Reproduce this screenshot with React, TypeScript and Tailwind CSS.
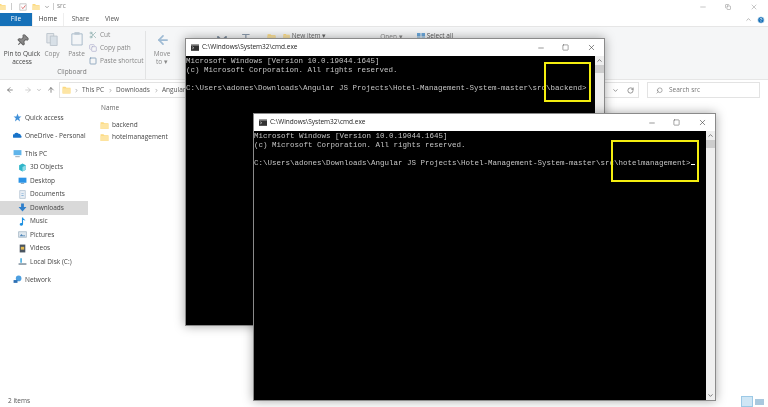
import React from 'react';
import { ArrowLeft, ArrowRight, ArrowUp, ChevronDown, ChevronUp, ChevronRight, RotateCw, Search, Scissors, Pin, Minus, Square, X, Copy, HelpCircle } from 'lucide-react';

const Folder: React.FC<{ className?: string }> = ({ className }) => (
  <svg viewBox="0 0 16 16" className={className}>
    <path d="M1 2h5l2 2h7v10H1z" fill="#fcd97e" />
    <path d="M1 5h14v9H1z" fill="#fde5a4" />
  </svg>
);

const NavIcon: React.FC<{ kind: string }> = ({ kind }) => {
  const cls = 'w-[9px] h-[9px] shrink-0';
  switch (kind) {
    case 'star':
      return <svg viewBox="0 0 16 16" className={cls}><path d="M8 1l2 5h5l-4 3.5L12.5 15 8 11.5 3.5 15 5 9.5 1 6h5z" fill="#3f8fd8" /></svg>;
    case 'cloud':
      return <svg viewBox="0 0 16 16" className={cls}><path d="M1 12a3 3 0 011-6 4.500 4.500 0 018-1 3.500 3.500 0 014 3 2.200 2.200 0 010 4z" fill="#1873c9" /></svg>;
    case 'pc':
      return <svg viewBox="0 0 16 16" className={cls}><path d="M1 2h14v9H1z" fill="#5fb4ea" /><path d="M4 13h8v1.500H4z" fill="#8a9aa8" /></svg>;
    case 'cube':
      return <svg viewBox="0 0 16 16" className={cls}><path d="M8 1l6 3v8l-6 3-6-3V4z" fill="#2fb5c9" /><path d="M8 7l6-3v8l-6 3z" fill="#8fdbe8" /></svg>;
    case 'desktop':
      return <svg viewBox="0 0 16 16" className={cls}><path d="M1 3h14v9H1z" fill="#2a93e6" /><path d="M5 13h6v1H5z" fill="#4d6c85" /></svg>;
    case 'doc':
      return <svg viewBox="0 0 16 16" className={cls}><path d="M3 1h10v14H3z" fill="#e8eef4" stroke="#9db1c4" /><path d="M6 6h4v1H6zm0 3h4v1H6z" fill="#6fa2cf" /></svg>;
    case 'down':
      return <svg viewBox="0 0 16 16" className={cls}><path d="M5.500 1h5v6H15l-7 8-7-8h4.500z" fill="#2f7fcb" /></svg>;
    case 'music':
      return <svg viewBox="0 0 16 16" className={cls}><path d="M7 1h2c0 3 4 3 4 6-1-1-2-1.500-4-1.500V13a3 2.500 0 11-2-2.300z" fill="#1c8fe0" /></svg>;
    case 'pic':
      return <svg viewBox="0 0 16 16" className={cls}><path d="M1 3h14v10H1z" fill="#dfe8ef" stroke="#8aa0b2" /><path d="M3 11l3-4 3 3 2-1 2 2z" fill="#4f86b8" /></svg>;
    case 'video':
      return <svg viewBox="0 0 16 16" className={cls}><path d="M3 1h10v14H3z" fill="#4a5560" /><path d="M5 5h6v5H5z" fill="#e2b84f" /></svg>;
    case 'disk':
      return <svg viewBox="0 0 16 16" className={cls}><path d="M1 11h14v3H1z" fill="#8b9aa6" /><path d="M4 2h3v8H4z" fill="#4fb0e0" /></svg>;
    default:
      return <svg viewBox="0 0 16 16" className={cls}><circle cx="10" cy="6" r="5" fill="#4d9fe0" /><path d="M1 9h7v5H1z" fill="#2d6fb3" /></svg>;
  }
};

const NavRow: React.FC<{ icon: string; label: string; indent?: boolean; active?: boolean; className?: string }> = ({ icon, label, indent, active, className }) => (
  <div className={`flex items-center h-[13.5px] gap-[3px] ${indent ? 'pl-[18px]' : 'pl-[13px]'} ${active ? 'bg-[#d9d9d9]' : ''} ${className ?? ''}`}>
    <NavIcon kind={icon} />
    <span className="whitespace-nowrap">{label}</span>
  </div>
);

const CmdWindow: React.FC<{ className: string; lines: string[]; cursor?: boolean; box: string }> = ({ className, lines, cursor, box }) => (
  <div className={`absolute flex flex-col bg-white border border-[#8a8a8a] shadow-[0_0_10px_rgba(0,0,0,0.35)] ${className}`}>
    <div className="h-[17px] shrink-0 flex items-center pl-[5px] text-[#222] text-[6.5px]">
      <svg viewBox="0 0 12 10" className="w-[8px] h-[7px] mr-[3px] shrink-0">
        <path d="M0 0h12v10H0z" fill="#333" />
        <path d="M0 0h12v2H0z" fill="#aaa" />
        <path d="M2 4l2 1.500L2 7" stroke="#fff" fill="none" />
      </svg>
      <span className="flex-1">C:\Windows\System32\cmd.exe</span>
      <Minus className="w-[8px] h-[8px] mr-[17px] text-[#333]" strokeWidth={1.5} />
      <Square className="w-[7px] h-[7px] mr-[18px] text-[#333]" strokeWidth={1.5} />
      <X className="w-[9px] h-[9px] mr-[8px] text-[#333]" strokeWidth={1.5} />
    </div>
    <div className="flex-1 flex min-h-0">
      <pre className="flex-1 bg-black text-[#c4c4c4] font-['Liberation_Mono',monospace] text-[7.5px] leading-[9px] pt-[1px] overflow-hidden">
        {lines.join('\n')}
        {cursor && <span className="inline-block w-[4px] h-[1.5px] bg-white align-baseline" />}
      </pre>
      <div className="w-[9px] bg-[#efefef] flex flex-col items-center justify-between">
        <div className="w-full flex flex-col items-center">
          <ChevronUp className="w-[7px] h-[7px] my-[1px] text-[#555]" strokeWidth={2.5} />
          <div className="w-full h-[8px] bg-[#cdcdcd]" />
        </div>
        <ChevronDown className="w-[7px] h-[7px] mb-[1px] text-[#555]" strokeWidth={2.5} />
      </div>
    </div>
    <div className={`absolute border-[2px] border-[#f4ee10] ${box}`} />
  </div>
);

const App: React.FC = () => (
  <div className="relative w-[768px] h-[407px] overflow-hidden bg-white blur-[0.4px] font-['Open_Sans',sans-serif] text-[6.5px] leading-none text-[#333]">
    {/* Explorer */}
    <div className="flex flex-col h-full">
      <div className="h-[13px] flex items-center shrink-0">
        <Folder className="w-[8px] h-[8px] -ml-[2px] mr-[5px]" />
        <div className="w-px h-[7px] bg-[#ccc] mr-[7px]" />
        <svg viewBox="0 0 10 10" className="w-[8px] h-[8px] mr-[5px]"><path d="M1 1h8v8H1z" fill="#fff" stroke="#bbb" /><path d="M3 5l2 2 3-4" stroke="#d05050" fill="none" /></svg>
        <Folder className="w-[8px] h-[8px] mr-[4px]" />
        <ChevronDown className="w-[6px] h-[6px] mr-[3px] text-[#555]" />
        <div className="w-px h-[7px] bg-[#ccc] mr-[3px]" />
        <span className="text-[#888]">src</span>
        <div className="flex-1" />
        <Minus className="w-[8px] h-[8px] text-[#aaa] mr-[18px]" />
        <Copy className="w-[6px] h-[6px] text-[#888] mr-[19px]" />
        <X className="w-[8px] h-[8px] text-[#aaa] mr-[10px]" />
      </div>
      <div className="h-[13px] flex items-center shrink-0">
        <div className="w-[32px] h-full bg-[#1570b8] text-white flex items-center justify-center">File</div>
        <div className="w-[32px] h-full flex items-center justify-center border-x border-[#eee]">Home</div>
        <div className="w-[33px] text-center text-[#555]">Share</div>
        <div className="w-[30px] text-center text-[#555]">View</div>
        <div className="flex-1" />
        <ChevronUp className="w-[7px] h-[7px] text-[#888] mr-[5px]" />
        <HelpCircle className="w-[8px] h-[8px] text-white fill-[#1570b8] mr-[3px]" />
      </div>
      <div className="h-[54px] shrink-0 bg-[#f5f6f7] border-y border-[#e6e6e6] flex pt-[4px] text-[#666]">
        <div className="w-[146px] shrink-0 flex flex-col border-r border-[#e2e3e4]">
          <div className="flex h-[37px]">
            <div className="w-[40px] flex flex-col items-center pl-[4px] text-[#444]">
              <Pin className="w-[13px] h-[13px] rotate-45 mt-[3px] mb-[4px] text-[#666] fill-[#888]" />
              <span className="whitespace-nowrap mb-[1px]">Pin to Quick</span>
              <span>access</span>
            </div>
            <div className="w-[24px] flex flex-col items-center text-[#888]">
              <svg viewBox="0 0 14 16" className="w-[12px] h-[15px] mt-[1px] mb-[4px]"><path d="M1 1h8v11H1z" fill="#e2e6ea" stroke="#b9c2ca" /><path d="M5 4h8v11H5z" fill="#d8e0e7" stroke="#b9c2ca" /></svg>
              <span>Copy</span>
            </div>
            <div className="w-[25px] flex flex-col items-center text-[#888]">
              <svg viewBox="0 0 14 16" className="w-[12px] h-[16px] mb-[4px]"><path d="M1 2h12v13H1z" fill="#f3f5f7" stroke="#9fb3c4" /><path d="M4 0h6v3H4z" fill="#b9c6d1" /></svg>
              <span>Paste</span>
            </div>
            <div className="flex flex-col gap-[4px] text-[#888] whitespace-nowrap">
              <div className="flex items-center gap-[3px]"><Scissors className="w-[8px] h-[8px] text-[#8aa]" />Cut</div>
              <div className="flex items-center gap-[3px] mt-[1px]"><Copy className="w-[8px] h-[8px] text-[#aac]" />Copy path</div>
              <div className="flex items-center gap-[3px] mt-[1px]"><Square className="w-[8px] h-[8px] text-[#68a]" />Paste shortcut</div>
            </div>
          </div>
          <div className="mt-[1px] text-center text-[#777] pr-[1px]">Clipboard</div>
        </div>
        <div className="flex-1 flex text-[#888]">
          <div className="w-[28px] ml-[2px] flex flex-col items-center">
            <ArrowRight className="w-[14px] h-[14px] rotate-180 mt-[2px] mb-[4px] ml-[2px] text-[#9fbbd4]" strokeWidth={3} />
            <span className="mb-[1px]">Move</span><span>to ▾</span>
          </div>
          <div className="w-[38px]" />
          <X className="w-[16px] h-[16px] mt-[2px] text-[#7c8c9c]" strokeWidth={3} />
          <div className="w-[12px]" />
          <span className="text-[14px] text-[#8a9aaa] mt-[1px]">T</span>
          <div className="w-[17px]" />
          <Folder className="w-[9px] h-[9px] mt-[2px]" />
          <div className="flex items-center h-[11px] ml-[7px] gap-[2px] text-[#666]">
            <Folder className="w-[7px] h-[7px]" /><span className="whitespace-nowrap">New item ▾</span>
          </div>
          <div className="w-[54px]" />
          <span className="mt-[3px] whitespace-nowrap">Open ▾</span>
          <div className="w-[14px]" />
          <div className="flex items-center h-[11px] gap-[2px] text-[#555]">
            <svg viewBox="0 0 8 8" className="w-[8px] h-[8px]"><path d="M0 0h3.500v3.500H0zM4.500 0H8v3.500H4.500zM0 4.500h3.500V8H0zM4.500 4.500H8V8H4.500z" fill="#6aa6d8" /></svg>
            <span className="whitespace-nowrap">Select all</span>
          </div>
        </div>
      </div>
      <div className="h-[20px] shrink-0 flex items-center text-[#555]">
        <ArrowLeft className="w-[8px] h-[8px] ml-[6px] mr-[10px] text-[#555]" />
        <ArrowRight className="w-[8px] h-[8px] mr-[4px] text-[#bbb]" />
        <ChevronDown className="w-[6px] h-[6px] mr-[5px] text-[#888]" />
        <ArrowUp className="w-[8px] h-[8px] mr-[4px] text-[#555]" />
        <div className="w-[580px] h-[16px] border border-[#e3e3e3] flex items-center pl-[2px] shrink-0">
          <Folder className="w-[9px] h-[10px] mr-[3px]" />
          <ChevronRight className="w-[5px] h-[5px] mr-[3px]" />
          <span className="mr-[4px]">This PC</span>
          <ChevronRight className="w-[5px] h-[5px] mr-[3px]" />
          <span className="mr-[4px]">Downloads</span>
          <ChevronRight className="w-[5px] h-[5px] mr-[3px]" />
          <span>Angular JS Projects</span>
          <div className="flex-1" />
          <ChevronDown className="w-[7px] h-[7px] mr-[8px]" />
          <RotateCw className="w-[7px] h-[7px] mr-[4px]" />
        </div>
        <div className="w-[113px] h-[16px] ml-[8px] border border-[#e3e3e3] flex items-center pl-[8px] text-[#777]">
          <Search className="w-[7px] h-[7px] mr-[6px] -scale-x-100" />Search src
        </div>
      </div>
      <div className="flex-1 min-h-0 flex">
        <div className="w-[88px] shrink-0 pt-[11px] text-[#444]">
          <NavRow icon="star" label="Quick access" />
          <NavRow icon="cloud" label="OneDrive - Personal" className="mt-[4.500px]" />
          <NavRow icon="pc" label="This PC" className="mt-[4.500px]" />
          <NavRow icon="cube" label="3D Objects" indent />
          <NavRow icon="desktop" label="Desktop" indent />
          <NavRow icon="doc" label="Documents" indent />
          <NavRow icon="down" label="Downloads" indent active />
          <NavRow icon="music" label="Music" indent />
          <NavRow icon="pic" label="Pictures" indent />
          <NavRow icon="video" label="Videos" indent />
          <NavRow icon="disk" label="Local Disk (C:)" indent />
          <NavRow icon="net" label="Network" className="mt-[4.500px]" />
        </div>
        <div className="flex-1 pl-[12px] pt-[5px]">
          <div className="pl-[1px] text-[#666] h-[7px]">Name</div>
          <div className="mt-[7px] flex items-center gap-[3px] h-[12px] text-[#444]"><Folder className="w-[9px] h-[9px]" />backend</div>
          <div className="flex items-center gap-[3px] h-[12px] text-[#444]"><Folder className="w-[9px] h-[9px]" />hotelmanagement</div>
        </div>
      </div>
      <div className="h-[11px] shrink-0 flex items-center pl-[8px] pr-[4px] text-[#555]">
        <span>2 items</span>
        <div className="flex-1" />
        <div className="w-[12px] h-[11px] bg-[#cfe6f5] border border-[#9cc9e6] mr-[2px]" />
        <div className="w-[9px] h-[6px] bg-[#a9c8de]" />
      </div>
    </div>

    {/* Terminals */}
    <CmdWindow
      className="left-[185px] top-[38px] w-[420px] h-[288px]"
      lines={[
        'Microsoft Windows [Version 10.0.19044.1645]',
        '(c) Microsoft Corporation. All rights reserved.',
        '',
        'C:\\Users\\adones\\Downloads\\Angular JS Projects\\Hotel-Management-System-master\\src\\backend>',
      ]}
      box="left-[358px] top-[23px] w-[47px] h-[40px]"
    />
    <CmdWindow
      className="left-[253px] top-[113px] w-[463px] h-[288px]"
      lines={[
        'Microsoft Windows [Version 10.0.19044.1645]',
        '(c) Microsoft Corporation. All rights reserved.',
        '',
        'C:\\Users\\adones\\Downloads\\Angular JS Projects\\Hotel-Management-System-master\\src\\hotelmanagement>',
      ]}
      cursor
      box="left-[357px] top-[26px] w-[88px] h-[42px]"
    />
  </div>
);

export default App;
